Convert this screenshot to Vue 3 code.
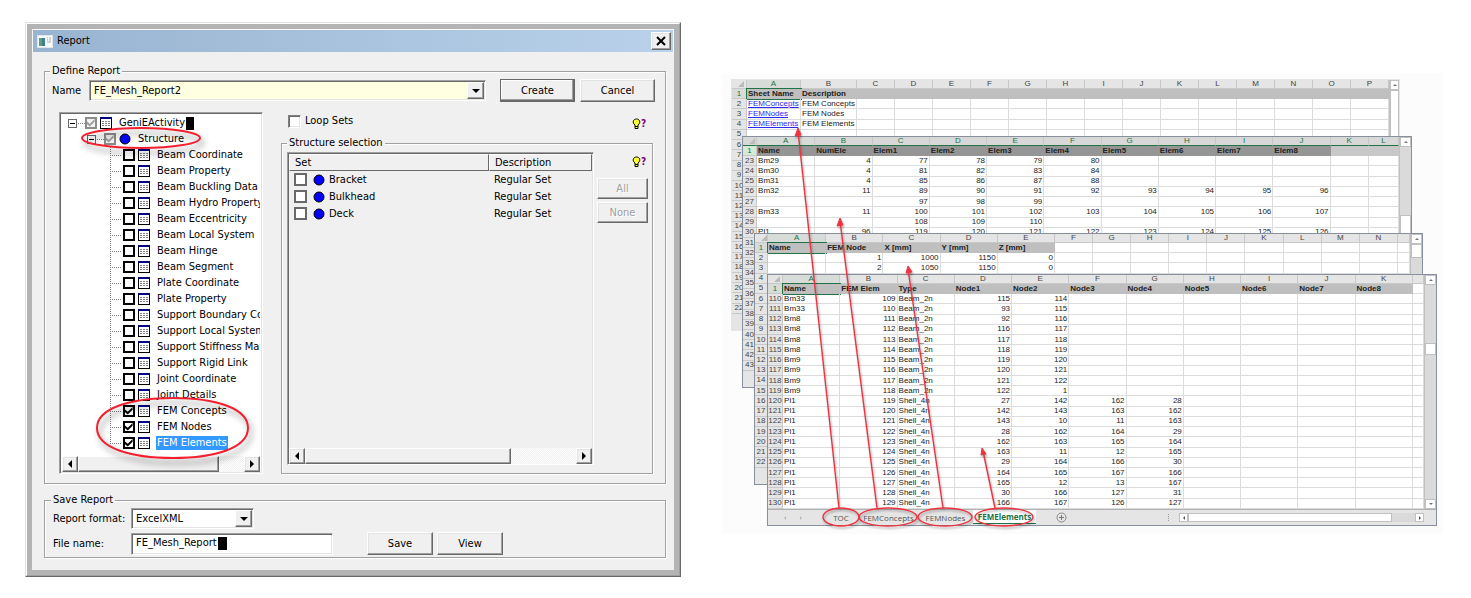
<script setup>
import { ref } from 'vue'

const reportName = ref('FE_Mesh_Report2')
const reportFormat = ref('ExcelXML')
const fileName = ref('FE_Mesh_Report')

const tree = ref([
  { label: 'GeniEActivity', level: 0, icon: 'grid', on: true, dim: true, caret: true },
  { label: 'Structure', level: 1, icon: 'dot', on: true, dim: true },
  ...[
    'Beam Coordinate', 'Beam Property', 'Beam Buckling Data', 'Beam Hydro Property',
    'Beam Eccentricity', 'Beam Local System', 'Beam Hinge', 'Beam Segment',
    'Plate Coordinate', 'Plate Property', 'Support Boundary Condition',
    'Support Local System', 'Support Stiffness Matrix', 'Support Rigid Link',
    'Joint Coordinate', 'Joint Details',
  ].map((label) => ({ label, level: 2, icon: 'grid', on: false })),
  { label: 'FEM Concepts', level: 2, icon: 'grid', on: true },
  { label: 'FEM Nodes', level: 2, icon: 'grid', on: true },
  { label: 'FEM Elements', level: 2, icon: 'grid', on: true, selected: true, last: true },
])

const sets = ref([
  { name: 'Bracket', on: false },
  { name: 'Bulkhead', on: false },
  { name: 'Deck', on: false },
])

const letters = 'ABCDEFGHIJKLMNOP'.split('')
const repeat = (width, count) => Array(count).fill(width)
const numbered = (from, to) =>
  Array.from({ length: to - from + 1 }, (_, i) => ({ n: from + i, cells: [] }))

const concepts = [
  ['Bm29', 4, 77, 78, 79, 80],
  ['Bm30', 4, 81, 82, 83, 84],
  ['Bm31', 4, 85, 86, 87, 88],
  ['Bm32', 11, 89, 90, 91, 92, 93, 94, 95, 96],
  ['', '', 97, 98, 99],
  ['Bm33', 11, 100, 101, 102, 103, 104, 105, 106, 107],
  ['', '', 108, 109, 110],
  ['Pl1', 96, 119, 120, 121, 122, 123, 124, 125, 126],
]

const elements = [
  ['Bm33', 115, 114], ['Bm33', 93, 115], ['Bm8', 92, 116], ['Bm8', 116, 117],
  ['Bm8', 117, 118], ['Bm8', 118, 119], ['Bm9', 119, 120], ['Bm9', 120, 121],
  ['Bm9', 121, 122], ['Bm9', 122, 1],
  ['Pl1', 27, 142, 162, 28], ['Pl1', 142, 143, 163, 162], ['Pl1', 143, 10, 11, 163],
  ['Pl1', 28, 162, 164, 29], ['Pl1', 162, 163, 165, 164], ['Pl1', 163, 11, 12, 165],
  ['Pl1', 29, 164, 166, 30], ['Pl1', 164, 165, 167, 166], ['Pl1', 165, 12, 13, 167],
  ['Pl1', 30, 166, 127, 31], ['Pl1', 166, 167, 126, 127],
]

const sheets = [
  {
    id: 'toc',
    widths: [15, 54, 56, ...repeat(38, 14)],
    columns: letters,
    filled: 16,
    rows: [
      { n: 1, cells: ['Sheet Name', 'Description'] },
      { n: 2, cells: ['FEMConcepts', 'FEM Concepts'] },
      { n: 3, cells: ['FEMNodes', 'FEM Nodes'] },
      { n: 4, cells: ['FEMElements', 'FEM Elements'] },
      ...numbered(5, 22),
    ],
  },
  {
    id: 'concepts',
    widths: [14, 58, ...repeat(57, 9), 38, 30],
    columns: letters.slice(0, 12),
    filled: 12,
    rows: [
      { n: 1, cells: ['Name', 'NumEle', 'Elem1', 'Elem2', 'Elem3', 'Elem4', 'Elem5', 'Elem6', 'Elem7', 'Elem8'] },
      ...concepts.map((cells, i) => ({ n: 23 + i, cells })),
      ...numbered(31, 43),
    ],
  },
  {
    id: 'nodes',
    widths: [13, 58, ...repeat(57, 4), ...repeat(38, 9), 12],
    columns: [...letters.slice(0, 14), ''],
    filled: 5,
    rows: [
      { n: 1, cells: ['Name', 'FEM Node', 'X [mm]', 'Y [mm]', 'Z [mm]'] },
      { n: 2, cells: ['', 1, 1000, 1150, 0] },
      { n: 3, cells: ['', 2, 1050, 1150, 0] },
      ...numbered(4, 22),
    ],
  },
  {
    id: 'elements',
    widths: [15, ...repeat(57, 11), 11],
    columns: [...letters.slice(0, 11), ''],
    filled: 11,
    rows: [
      { n: 1, cells: ['Name', 'FEM Elem', 'Type', 'Node1', 'Node2', 'Node3', 'Node4', 'Node5', 'Node6', 'Node7', 'Node8'] },
      ...elements.map(([name, ...nodes], i) => ({
        n: 110 + i,
        cells: [name, 109 + i, i < 10 ? 'Beam_2n' : 'Shell_4n', ...nodes],
      })),
    ],
  },
]

const tabs = ['TOC', 'FEMConcepts', 'FEMNodes', 'FEMElements']
</script>

<template>
  <main class="page">
    <section class="dialog" aria-label="Report">
      <div class="frame">
        <header class="titlebar">
          <svg class="app-icon" width="16" height="13" viewBox="0 0 16 13" aria-hidden="true">
            <rect x="0.5" y="0.5" width="15" height="12" fill="#fafafa" stroke="#e2e6ea" />
            <rect x="2" y="3" width="6" height="8" fill="#3d7f8c" />
            <rect x="2" y="3" width="3" height="8" fill="#5d9f7c" />
            <path d="M10 3h1M12 3h2M10 5h1M12 5h2M10 7h4" stroke="#a8a8a8" />
          </svg>
          <h1>Report</h1>
          <button class="btn close" type="button" aria-label="Close">
            <svg width="10" height="10" viewBox="0 0 10 10"><path d="M1 1l8 8M9 1l-8 8" stroke="#000" stroke-width="2" /></svg>
          </button>
        </header>

        <div class="body">
          <fieldset class="group define">
            <legend>Define Report</legend>
            <div class="name-row">
              <label for="report-name">Name</label>
              <div class="combo yellow">
                <select id="report-name" v-model="reportName"><option>FE_Mesh_Report2</option></select>
                <span class="drop" aria-hidden="true"><i></i></span>
              </div>
              <button class="btn wide default" type="button">Create</button>
              <button class="btn wide cancel" type="button">Cancel</button>
            </div>

            <div class="panels">
              <div class="tree-wrap">
                <div class="tree sunken">
                  <ul>
                    <li v-for="node in tree" :key="node.label" :class="['l' + node.level, { last: node.last }]">
                      <span class="branch"><b v-if="node.level < 2"></b></span>
                      <label>
                        <input v-model="node.on" type="checkbox" :class="{ dim: node.dim }" />
                        <svg v-if="node.icon === 'grid'" width="12" height="12" viewBox="0 0 12 12" shape-rendering="crispEdges">
                          <rect x="0.5" y="0.5" width="11" height="11" fill="#fff" stroke="#000" />
                          <path d="M0 1h12" stroke="#000080" stroke-width="2" />
                          <path d="M2 4.5h8M2 6.5h8M2 8.5h8" stroke="#808080" stroke-dasharray="2 1" />
                        </svg>
                        <svg v-else width="12" height="12" viewBox="0 0 12 12"><circle cx="6" cy="6" r="5" fill="#00f" stroke="#000" /></svg>
                        <span class="text" :class="{ selected: node.selected }">{{ node.label }}</span>
                        <i v-if="node.caret" class="block"></i>
                      </label>
                    </li>
                  </ul>
                  <div class="scroll">
                    <button class="btn" type="button" aria-label="Scroll left"><i class="left"></i></button>
                    <span class="thumb tree-thumb"></span>
                    <button class="btn end" type="button" aria-label="Scroll right"><i class="right"></i></button>
                  </div>
                </div>
                <svg class="marks" width="204" height="362" viewBox="0 0 204 362" aria-hidden="true">
                  <ellipse cx="82" cy="26" rx="59" ry="10" />
                  <path d="M38 316C38 296 72 286 114 286S189 296 189 316S156 346 114 346S38 336 38 316Z" />
                </svg>
              </div>

              <div class="right">
                <div class="loop">
                  <label><input type="checkbox" class="soft small" />Loop Sets</label>
                  <span class="tip">
                    <svg width="9" height="12" viewBox="0 0 9 12"><path d="M3 7C0 5 1 1 4.500 1S9 5 6 7V10.500H3Z" fill="#ff3" stroke="#000" /><path d="M3 8.500h3" stroke="#000" /></svg>?
                  </span>
                </div>
                <fieldset class="group structure">
                  <legend>Structure selection</legend>
                  <div class="sets sunken">
                    <table>
                      <thead><tr><th class="set-col">Set</th><th>Description</th></tr></thead>
                      <tbody>
                        <tr v-for="set in sets" :key="set.name">
                          <td>
                            <label>
                              <input v-model="set.on" type="checkbox" class="soft" />
                              <svg width="12" height="12" viewBox="0 0 12 12"><circle cx="6" cy="6" r="5" fill="#00f" stroke="#000" /></svg>
                              {{ set.name }}
                            </label>
                          </td>
                          <td>Regular Set</td>
                        </tr>
                      </tbody>
                    </table>
                    <div class="scroll">
                      <button class="btn" type="button" aria-label="Scroll left"><i class="left"></i></button>
                      <span class="thumb set-thumb"></span>
                      <button class="btn end" type="button" aria-label="Scroll right"><i class="right"></i></button>
                    </div>
                  </div>
                  <div class="side">
                    <span class="tip">
                      <svg width="9" height="12" viewBox="0 0 9 12"><path d="M3 7C0 5 1 1 4.500 1S9 5 6 7V10.500H3Z" fill="#ff3" stroke="#000" /><path d="M3 8.500h3" stroke="#000" /></svg>?
                    </span>
                    <button class="btn" type="button" disabled>All</button>
                    <button class="btn" type="button" disabled>None</button>
                  </div>
                </fieldset>
              </div>
            </div>
          </fieldset>

          <fieldset class="group save">
            <legend>Save Report</legend>
            <div class="save-row">
              <label for="format">Report format:</label>
              <div class="combo format">
                <select id="format" v-model="reportFormat"><option>ExcelXML</option></select>
                <span class="drop" aria-hidden="true"><i></i></span>
              </div>
            </div>
            <div class="save-row">
              <label for="file">File name:</label>
              <div class="file">
                <input id="file" v-model="fileName" type="text" class="sunken" />
                <i class="block"></i>
              </div>
              <button class="btn medium first" type="button">Save</button>
              <button class="btn medium" type="button">View</button>
            </div>
          </fieldset>
        </div>
      </div>
    </section>

    <section class="canvas" aria-label="Generated workbook sheets">
      <div v-for="sheet in sheets" :key="sheet.id" class="sheet" :class="sheet.id">
        <table>
          <colgroup><col v-for="(w, i) in sheet.widths" :key="i" :style="{ width: w + 'px' }" /></colgroup>
          <thead>
            <tr>
              <th class="corner"><i></i></th>
              <th v-for="(c, i) in sheet.columns" :key="i">{{ c }}</th>
            </tr>
          </thead>
          <tbody>
            <tr v-for="(row, r) in sheet.rows" :key="row.n">
              <th>{{ row.n }}</th>
              <td
                v-for="(c, i) in sheet.columns"
                :key="i"
                :class="{ head: r === 0 && i < sheet.filled, num: typeof row.cells[i] === 'number', pale: sheet.id === 'concepts' && i > 9 }"
              >
                <a v-if="sheet.id === 'toc' && i === 0 && r > 0 && row.cells[0]" href="#">{{ row.cells[0] }}</a>
                <template v-else>{{ row.cells[i] }}</template>
              </td>
            </tr>
          </tbody>
        </table>
        <div class="vscroll"><span class="cap"><i></i></span><span class="grip"></span><span class="cap bottom"><i></i></span></div>
        <footer v-if="sheet.id === 'elements'" class="tabs">
          <span class="nav"><i></i><i class="next"></i></span>
          <button v-for="t in tabs" :key="t" type="button" :class="'tab-' + t.toLowerCase()">{{ t }}</button>
          <svg class="add" width="11" height="11" viewBox="0 0 11 11"><path d="M5.500 3v5M3 5.500h5" stroke="#777" /><circle cx="5.500" cy="5.500" r="4.500" fill="none" stroke="#888" /></svg>
          <span class="divider"></span>
          <div class="hscroll"><span class="cap l"><i></i></span><span class="bar"></span><span class="cap r"><i></i></span></div>
        </footer>
      </div>

      <svg class="arrows" width="721" height="461" viewBox="0 0 721 461" aria-hidden="true">
        <path d="M117 435L76 58M155 435L118 148M221 435L186 196M273 435L261 378" />
        <g class="tips">
          <path d="M76 55l3 7-6 1zM118 145l3 7-6 1zM186 193l4 6-6 1zM260 375l4 6-5 1z" />
        </g>
        <ellipse cx="119" cy="444" rx="18" ry="9" />
        <ellipse cx="166" cy="444" rx="29" ry="9" />
        <ellipse cx="223" cy="444" rx="27" ry="9" />
        <ellipse cx="282" cy="444" rx="29" ry="9" />
      </svg>
    </section>
  </main>
</template>

<style>
body {
  margin: 0;
  background: #fff;
}
</style>

<style scoped>
* {
  box-sizing: border-box;
}
.page {
  display: grid;
  grid-template-columns: minmax(0, 656fr) minmax(0, 721fr);
  gap: 41px;
  align-items: start;
  padding: 22px 28px 22px 25px;
  font: 11px/14px "DejaVu Sans Condensed", "DejaVu Sans", sans-serif;
  color: #000;
}

/* Dialog */
.dialog {
  border: 1px solid;
  border-color: #e3e3e3 #696969 #696969 #e3e3e3;
  background: #f0f0f0;
}
.frame {
  border: 1px solid;
  border-color: #fff #a0a0a0 #a0a0a0 #fff;
  padding: 5px;
  background: #b4b4b4;
}
.titlebar {
  display: flex;
  align-items: center;
  height: 23px;
  padding: 0 2px 0 4px;
  border: solid #f8f8f8;
  border-width: 1px 1px 0;
  background: linear-gradient(90deg, #99b4d1, #b9d1ea);
}
h1 {
  flex: 1;
  margin: 0 0 0 4px;
  font-size: 11px;
  font-weight: 400;
}
.body {
  padding: 12px 8px 12px 12px;
  background: #f0f0f0;
}
.group {
  min-width: 0;
  margin: 0;
  border: 1px solid #a0a0a0;
  box-shadow: 1px 1px 0 #fff, inset 1px 1px 0 #fff;
}
legend {
  padding: 0 2px;
  margin-left: -2px;
  line-height: 14px;
  background: #f0f0f0;
}
.define {
  padding: 1px 10px 9px 7px;
}
.name-row {
  display: flex;
  align-items: center;
}
.name-row > label {
  width: 37px;
}
.btn {
  padding: 0;
  border: 1px solid;
  border-color: #fff #696969 #696969 #fff;
  background: #f0f0f0;
  box-shadow: inset -1px -1px 0 #a0a0a0, inset 1px 1px 0 #e3e3e3;
  font: inherit;
  color: #000;
}
.btn:disabled {
  color: #a0a0a0;
  text-shadow: 1px 1px 0 #fff;
}
.btn.close {
  display: grid;
  place-items: center;
  width: 20px;
  height: 18px;
}
.btn.wide {
  width: 75px;
  height: 23px;
}
.btn.default {
  margin: 0 5px 0 14px;
  border-color: #696969;
  box-shadow: inset -1px -1px 0 #696969, inset -2px -2px 0 #a0a0a0, inset 1px 1px 0 #fff;
}
.sunken,
.combo {
  border: 1px solid;
  border-color: #a0a0a0 #fff #fff #a0a0a0;
  box-shadow: inset 1px 1px 0 #696969, inset -1px -1px 0 #e3e3e3;
  background: #fff;
}
.combo {
  position: relative;
  flex: 1;
  height: 21px;
  padding: 2px;
}
.combo.yellow {
  background: #ffffe1;
}
.combo select {
  display: block;
  width: 100%;
  height: 15px;
  padding: 0 20px 0 2px;
  border: 0;
  appearance: none;
  background: none;
  font: inherit;
  color: #000;
}
.drop {
  position: absolute;
  top: 1px;
  right: 1px;
  bottom: 1px;
  display: grid;
  place-items: center;
  width: 17px;
  border: 1px solid;
  border-color: #fff #696969 #696969 #fff;
  box-shadow: inset -1px -1px 0 #a0a0a0;
  background: #f0f0f0;
  pointer-events: none;
}
.drop i {
  border: 4px solid transparent;
  border-top-color: #000;
  border-bottom: 0;
}
.panels {
  display: flex;
  gap: 18px;
  padding: 10px 2px 0 7px;
}

/* Tree */
.tree-wrap {
  position: relative;
  flex: none;
  width: 204px;
}
.tree {
  height: 362px;
  padding: 2px 2px 1px;
  display: flex;
  flex-direction: column;
  justify-content: space-between;
}
.tree ul {
  margin: 0;
  padding: 0;
  list-style: none;
  overflow: hidden;
}
.tree li {
  display: flex;
  height: 16px;
  padding-left: 6px;
  white-space: nowrap;
}
.tree li.l1 {
  padding-left: 25px;
}
.tree li.l2 {
  padding-left: 44px;
}
.tree label {
  display: flex;
  align-items: center;
}
.branch {
  position: relative;
  flex: none;
  width: 17px;
  background: linear-gradient(90deg, #808080 1px, transparent 1px) 4px 8px / 2px 1px repeat-x;
}
.l2 .branch::before {
  content: "";
  position: absolute;
  left: 4px;
  top: 0;
  bottom: 0;
  width: 1px;
  background: repeating-linear-gradient(#808080 0 1px, #fff 1px 2px);
}
.l2 .branch {
  background-origin: content-box;
  background-clip: content-box;
  padding: 0 2px 0 4px;
  background-position: 0 8px;
}
.l2.last .branch::before {
  bottom: 7px;
}
.branch b {
  display: block;
  width: 9px;
  height: 9px;
  margin-top: 4px;
  border: 1px solid #696969;
  background: linear-gradient(#000, #000) center / 5px 1px no-repeat #fff;
}
.tree label > svg {
  flex: none;
  margin: 0 6px 0 3px;
}
.text {
  padding: 0 1px;
}
.selected {
  color: #fff;
  background: #39f;
}
.block {
  display: block;
  width: 8px;
  height: 13px;
  background: #000;
}
input[type="checkbox"] {
  flex: none;
  width: 12px;
  height: 12px;
  margin: 0;
  border: 2px solid #000;
  appearance: none;
  background: #fff;
}
input[type="checkbox"]:checked::before {
  content: "";
  display: block;
  width: 8px;
  height: 8px;
  background: #000;
  clip-path: polygon(0 30%, 35% 60%, 95% 0, 95% 35%, 35% 95%, 0 65%);
}
input.dim {
  border-color: #8c8c8c;
  background: #f4f4f4;
}
input.dim:checked::before {
  background: #a0a0a0;
}
input.soft {
  width: 13px;
  height: 13px;
  border-color: #696969;
}
input.soft.small {
  border: 1px solid;
  border-color: #808080 #fff #fff #808080;
  box-shadow: inset 1px 1px 0 #696969, inset -1px -1px 0 #e3e3e3;
}
.scroll {
  display: flex;
  height: 16px;
  background: repeating-conic-gradient(#fff 0 25%, #f0f0f0 0 50%) 0 0 / 2px 2px;
}
.scroll .btn {
  display: grid;
  place-items: center;
  flex: none;
  width: 16px;
}
.scroll .end {
  margin-left: auto;
}
.scroll .left,
.scroll .right {
  border: 4px solid transparent;
}
.scroll .left {
  border-left: 0;
  border-right-color: #000;
}
.scroll .right {
  border-right: 0;
  border-left-color: #000;
}
.thumb {
  border: 1px solid;
  border-color: #fff #696969 #696969 #fff;
  box-shadow: inset -1px -1px 0 #a0a0a0;
  background: #f0f0f0;
}
.tree-thumb {
  width: 71%;
}
.set-thumb {
  width: 68%;
}
.marks {
  position: absolute;
  left: 0;
  top: 0;
  overflow: visible;
  fill: none;
  stroke: #f4202f;
  stroke-width: 2;
  filter: drop-shadow(3px 5px 3px rgba(0, 0, 0, 0.45));
  pointer-events: none;
}

/* Structure selection */
.right {
  flex: 1;
  min-width: 0;
  display: flex;
  flex-direction: column;
}
.loop {
  display: flex;
  justify-content: space-between;
  align-items: flex-start;
  height: 24px;
  padding: 2px 5px 0 7px;
}
.loop label {
  display: flex;
  align-items: center;
  gap: 4px;
}
.tip {
  display: flex;
  align-items: center;
  width: 16px;
  height: 12px;
  font-weight: 700;
  font-size: 10px;
  color: #800080;
}
.loop .tip {
  margin-top: 4px;
}
.structure {
  flex: 1;
  display: flex;
  gap: 3px;
  padding: 2px 4px 8px 5px;
}
.structure legend {
  margin-left: 0;
}
.sets {
  flex: 1;
  min-width: 0;
  display: flex;
  flex-direction: column;
  justify-content: space-between;
  padding: 1px 1px 0;
  background: #f0f0f0;
}
.sets table {
  width: 100%;
  border-collapse: separate;
  border-spacing: 0;
  table-layout: fixed;
}
.sets th {
  height: 17px;
  padding: 1px 5px 0;
  border: 1px solid;
  border-color: #fff #696969 #696969 #fff;
  text-align: left;
  font-weight: 400;
}
.set-col {
  width: 66%;
}
.sets td {
  height: 17px;
  padding: 0 5px;
}
.sets td label {
  display: flex;
  align-items: center;
  gap: 4px;
}
.sets td svg {
  margin-left: 2px;
}
.side {
  flex: none;
  width: 51px;
  display: flex;
  flex-direction: column;
  gap: 3px;
  padding-top: 4px;
}
.side .tip {
  align-self: flex-end;
  margin-bottom: 7px;
}
.side .btn {
  height: 21px;
}

/* Save */
.save {
  margin-top: 9px;
  padding: 1px 10px 2px 8px;
}
.save-row {
  display: flex;
  align-items: center;
}
.save-row + .save-row {
  margin-top: 3px;
}
.save-row > label {
  width: 78px;
}
.format {
  flex: none;
  width: 123px;
}
.file {
  position: relative;
  width: 202px;
}
.file input {
  display: block;
  width: 100%;
  height: 22px;
  padding: 0 4px 2px;
  font: inherit;
  color: #000;
}
.file .block {
  position: absolute;
  left: 87px;
  top: 4px;
  width: 9px;
}
.medium {
  width: 66px;
  height: 23px;
  margin-left: 4px;
}
.medium.first {
  margin-left: 34px;
}

/* Workbook sheets */
.canvas {
  position: relative;
  height: 461px;
  margin-top: 51px;
  background: #fcfcfc;
  font: 8px/8px "Liberation Sans", Arial, sans-serif;
  color: #222;
  overflow: hidden;
}
.sheet {
  position: absolute;
  display: grid;
  grid-template-columns: minmax(0, 1fr) 12px;
  grid-template-rows: 234px 16px;
  border: 1px solid #87909c;
  background: #e5e5e5;
}
.sheet.toc {
  left: 9px;
  top: 6px;
  right: 43px;
  border-color: #e5e5e5;
  grid-template-columns: minmax(0, 1fr) 10px;
}
.concepts {
  left: 20px;
  top: 63px;
  right: 31px;
}
.nodes {
  left: 32px;
  top: 160px;
  right: 20px;
}
.elements {
  left: 45px;
  top: 201px;
  right: 6px;
}
.sheet table {
  width: 100%;
  height: 234px;
  table-layout: fixed;
  border-collapse: separate;
  border-spacing: 0;
  background: #fff;
}
.sheet th,
.sheet td {
  padding: 0 1px;
  border: solid #dcdcdc;
  border-width: 0 1px 1px 0;
  white-space: nowrap;
  text-align: left;
}
.sheet th {
  padding: 0;
  border-color: #c8c8c8;
  background: #e5e5e5;
  font-weight: 400;
  text-align: center;
  color: #444;
}
.sheet td.num {
  text-align: right;
}
.sheet td.head {
  border-color: #bfbfbf;
  background: #bfbfbf;
  font-weight: 700;
  color: #222;
}
.sheet a {
  color: #2b2bf0;
}
.corner i {
  display: block;
  margin-left: 6px;
  width: 6px;
  height: 6px;
  background: #bbb;
  clip-path: polygon(100% 0, 100% 100%, 0 100%);
}
.sheet tbody tr:first-child th,
.sheet thead th:nth-child(2) {
  background: #d8dcd8;
  color: #217346;
}
.sheet:not(.concepts) tbody tr:first-child td:nth-child(2) {
  box-shadow: 0 0 0 1px #217346;
}
.concepts thead th {
  border-bottom-color: #217346;
  background: #d8d8d8;
  color: #217346;
}
.concepts tbody tr:first-child th {
  background: #d5ead9;
}
.concepts td.head {
  border-color: #959595;
  background: #959595;
}
.concepts td.head.pale {
  border-color: #c8c8c8;
  background: #c8c8c8;
}
.vscroll {
  display: flex;
  flex-direction: column;
  border-left: 1px solid #c0c0c0;
  background: #dadada;
}
.cap {
  display: grid;
  place-items: center;
  height: 10px;
  border: 1px solid #c0c0c0;
  background: #fff;
}
.cap i {
  border: 2px solid transparent;
  border-top: 0;
  border-bottom-color: #777;
}
.cap.bottom {
  margin-top: auto;
}
.cap.bottom i {
  border-top: 2px solid #777;
  border-bottom: 0;
}
.grip {
  height: 14px;
  border: 1px solid #c0c0c0;
  background: #fff;
}
.toc .grip {
  height: 60px;
}
.concepts .grip {
  margin-top: 68px;
  height: 30px;
}
.elements .grip {
  margin-top: 58px;
  height: 12px;
}
.tabs {
  grid-column: 1 / -1;
  display: flex;
  align-items: stretch;
  border-top: 1px solid #b0b0b0;
  font-family: "Open Sans", sans-serif;
}
.tabs button {
  padding: 0;
  border: 0;
  background: none;
  font: inherit;
  color: #555;
}
.nav {
  display: flex;
  align-items: center;
  gap: 14px;
  width: 55px;
  padding-left: 16px;
}
.nav i {
  border: 2px solid transparent;
  border-left: 0;
  border-right-color: #bbb;
}
.nav .next {
  border-left: 2px solid #bbb;
  border-right: 0;
}
.tabs .tab-toc {
  width: 36px;
}
.tabs .tab-femconcepts {
  width: 59px;
}
.tabs .tab-femnodes {
  width: 55px;
}
.tabs .tab-femelements {
  width: 63px;
  margin-bottom: 1px;
  border-bottom: 1px solid #217346;
  background: #fff;
  color: #217346;
  font-weight: 700;
}
.add {
  align-self: center;
  margin-left: 20px;
}
.divider {
  align-self: center;
  height: 7px;
  margin-left: auto;
  margin-right: 10px;
  border-left: 1px dotted #999;
}
.hscroll {
  align-self: center;
  display: flex;
  width: 245px;
  height: 9px;
  margin-right: 12px;
  background: #dadada;
}
.hscroll .cap {
  width: 9px;
  height: 9px;
}
.hscroll .r {
  margin-left: auto;
}
.hscroll .l i {
  border: 2px solid transparent;
  border-left: 0;
  border-right-color: #555;
}
.hscroll .r i {
  border: 2px solid transparent;
  border-right: 0;
  border-left-color: #555;
}
.bar {
  width: 204px;
  border: 1px solid #c0c0c0;
  background: #fff;
}
.arrows {
  position: absolute;
  left: 0;
  top: 0;
  fill: none;
  stroke: #ee3340;
  stroke-width: 1.4;
  filter: drop-shadow(1px 2px 1px rgba(0, 0, 0, 0.3));
  pointer-events: none;
}
.tips {
  fill: #ee3340;
  stroke-width: 1;
}
</style>
